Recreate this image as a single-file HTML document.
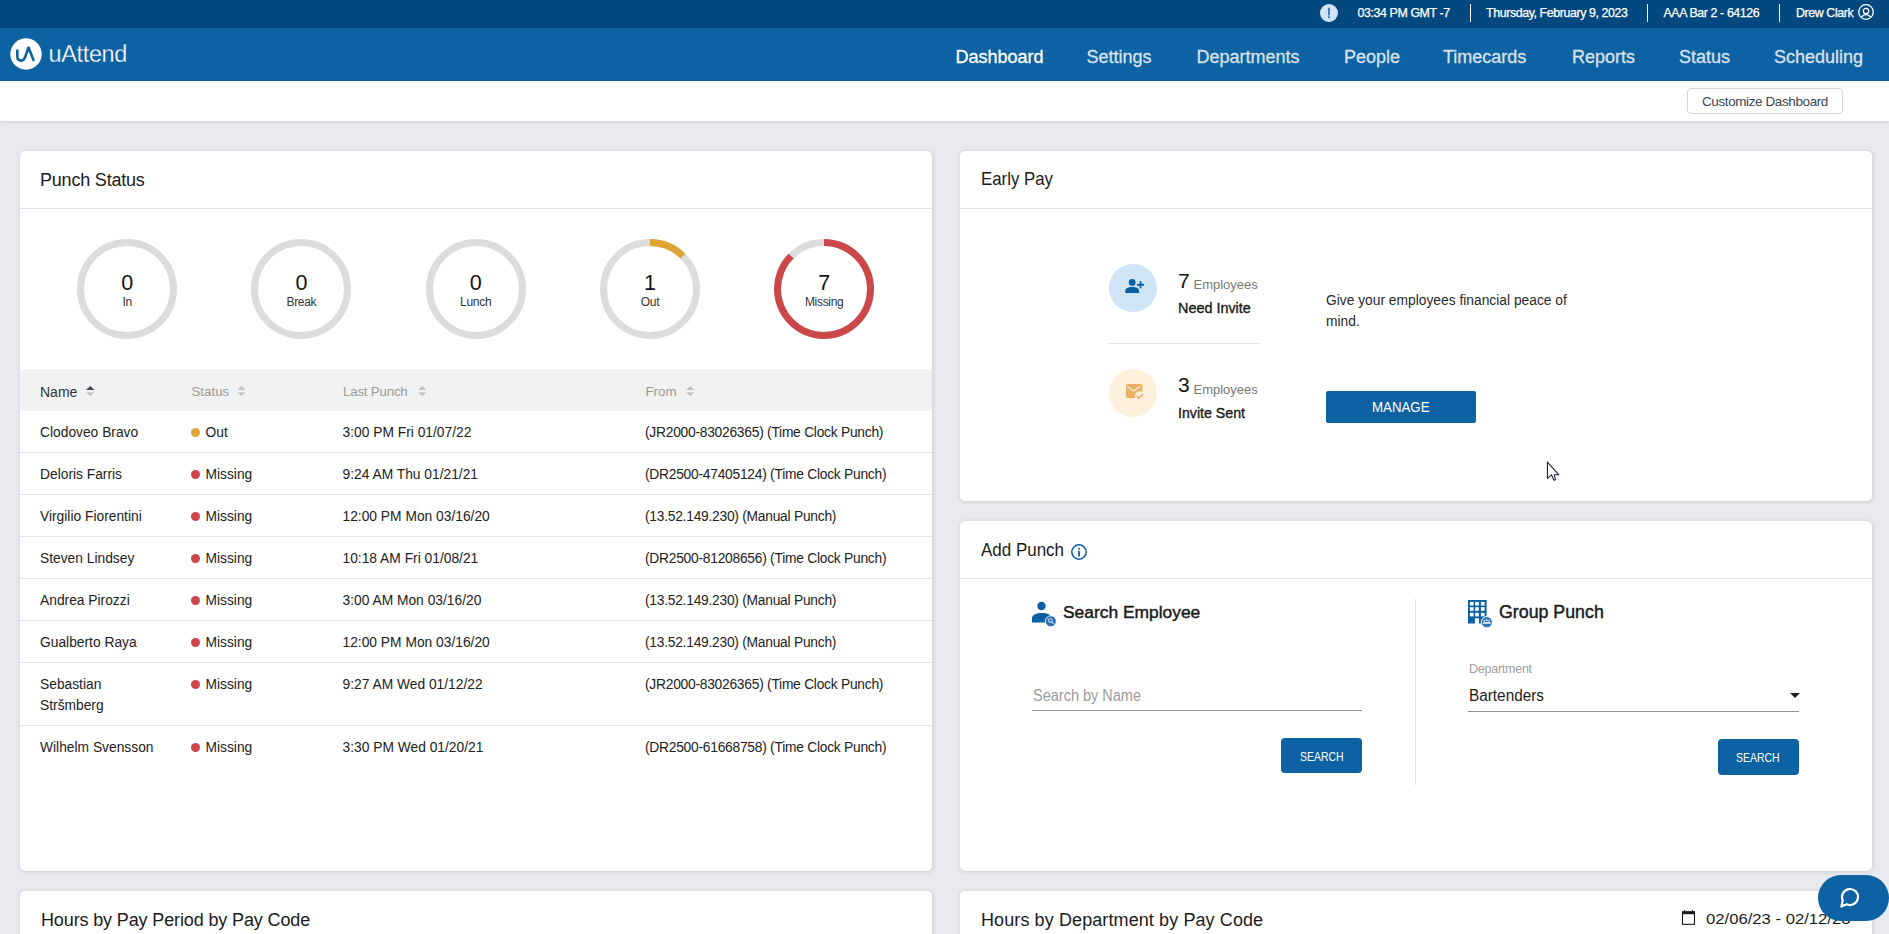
<!DOCTYPE html>
<html><head><meta charset="utf-8"><style>
*{box-sizing:border-box;margin:0;padding:0}
html,body{width:1889px;height:934px;overflow:hidden;background:#e9eaed;font-family:"Liberation Sans",sans-serif;color:#222}
.a{position:absolute;white-space:nowrap;line-height:1}
svg{position:absolute;overflow:visible}
</style></head><body>
<div style="position:absolute;left:0px;top:0px;width:1889px;height:28px;background:#03497f"></div>
<div style="position:absolute;left:0px;top:28px;width:1889px;height:53px;background:#0c62a2"></div>
<div style="position:absolute;left:0px;top:81px;width:1889px;height:40px;background:#fff;box-shadow:0 1px 3px rgba(0,0,0,.10)"></div>
<svg style="left:1320px;top:4px" width="18" height="18" viewBox="0 0 18 18"><circle cx="9" cy="9" r="9" fill="#d2e4f3"/><rect x="8.2" y="3.8" width="1.6" height="7.6" fill="#1b62a8"/><rect x="8.2" y="12.4" width="1.6" height="1.7" fill="#1b62a8"/></svg>
<div class="a" style="left:1357.5px;top:6.50px;font-size:12.4px;color:#fff;font-weight:400;letter-spacing:-0.4px;-webkit-text-stroke:0.25px #fff">03:34 PM GMT -7</div>
<div style="position:absolute;left:1470px;top:4px;width:1px;height:18px;background:#fff"></div>
<div class="a" style="left:1486px;top:6.50px;font-size:12.4px;color:#fff;font-weight:400;letter-spacing:-0.4px;-webkit-text-stroke:0.25px #fff">Thursday, February 9, 2023</div>
<div style="position:absolute;left:1647px;top:4px;width:1px;height:18px;background:#fff"></div>
<div class="a" style="left:1663.5px;top:6.50px;font-size:12.4px;color:#fff;font-weight:400;letter-spacing:-0.4px;-webkit-text-stroke:0.25px #fff">AAA Bar 2 - 64126</div>
<div style="position:absolute;left:1779px;top:4px;width:1px;height:18px;background:#fff"></div>
<div class="a" style="left:1796px;top:6.50px;font-size:12.4px;color:#fff;font-weight:400;letter-spacing:-0.4px;-webkit-text-stroke:0.25px #fff">Drew Clark</div>
<svg style="left:1858px;top:4px" width="16" height="16" viewBox="0 0 16 16" fill="none" stroke="#fff" stroke-width="1.3"><circle cx="8" cy="8" r="7.3"/><circle cx="8" cy="7" r="2.7"/><path d="M3.4 13.4c1.1-1.9 2.7-2.8 4.6-2.8s3.5 0.9 4.6 2.8"/></svg>
<svg style="left:10px;top:38px" width="32" height="32" viewBox="0 0 32 32"><circle cx="16" cy="16" r="15.7" fill="#fff"/><path d="M7.3 12.5v5.5c0 3 1.6 4.6 3.8 4.6 2.2 0 3.3-1.6 4.1-3.6l3.3-9.5 5 12.5" fill="none" stroke="#0c62a2" stroke-width="2.6" stroke-linecap="round" stroke-linejoin="round"/></svg>
<div class="a" style="left:48.5px;top:42.61px;font-size:23.5px;color:#fff;font-weight:400;letter-spacing:-0.35px;-webkit-text-stroke:0.3px #0c62a2">uAttend</div>
<div class="a" style="left:955.5px;top:47.76px;font-size:18px;color:#fff;font-weight:400;-webkit-text-stroke:0.3px #fff">Dashboard</div>
<div class="a" style="left:1086.5px;top:47.76px;font-size:18px;color:#d9e1ea;font-weight:400;-webkit-text-stroke:0.3px #d9e1ea">Settings</div>
<div class="a" style="left:1196.5px;top:47.76px;font-size:18px;color:#d9e1ea;font-weight:400;-webkit-text-stroke:0.3px #d9e1ea">Departments</div>
<div class="a" style="left:1344px;top:47.76px;font-size:18px;color:#d9e1ea;font-weight:400;-webkit-text-stroke:0.3px #d9e1ea">People</div>
<div class="a" style="left:1443px;top:47.76px;font-size:18px;color:#d9e1ea;font-weight:400;-webkit-text-stroke:0.3px #d9e1ea">Timecards</div>
<div class="a" style="left:1572px;top:47.76px;font-size:18px;color:#d9e1ea;font-weight:400;-webkit-text-stroke:0.3px #d9e1ea">Reports</div>
<div class="a" style="left:1679px;top:47.76px;font-size:18px;color:#d9e1ea;font-weight:400;-webkit-text-stroke:0.3px #d9e1ea">Status</div>
<div class="a" style="left:1774px;top:47.76px;font-size:18px;color:#d9e1ea;font-weight:400;-webkit-text-stroke:0.3px #d9e1ea">Scheduling</div>
<div style="position:absolute;left:1687px;top:88px;width:156px;height:26px;border:1px solid #d5d5d5;border-radius:4px;background:#fff"></div>
<div class="a" style="left:1702px;top:95.07px;font-size:13.5px;color:#3b4651;font-weight:400;letter-spacing:-0.4px">Customize Dashboard</div>
<div style="position:absolute;left:20px;top:151px;width:912px;height:720px;background:#fff;border-radius:5px;box-shadow:0.5px 0.5px 4px rgba(0,0,0,.12)"></div>
<div style="position:absolute;left:960px;top:151px;width:912px;height:350px;background:#fff;border-radius:5px;box-shadow:0.5px 0.5px 4px rgba(0,0,0,.12)"></div>
<div style="position:absolute;left:960px;top:521px;width:912px;height:350px;background:#fff;border-radius:5px;box-shadow:0.5px 0.5px 4px rgba(0,0,0,.12)"></div>
<div style="position:absolute;left:20px;top:891px;width:912px;height:60px;background:#fff;border-radius:5px;box-shadow:0.5px 0.5px 4px rgba(0,0,0,.12)"></div>
<div style="position:absolute;left:960px;top:891px;width:912px;height:60px;background:#fff;border-radius:5px;box-shadow:0.5px 0.5px 4px rgba(0,0,0,.12)"></div>
<div class="a" style="left:40px;top:171.26px;font-size:18px;color:#1b1b1b;font-weight:400;letter-spacing:-0.2px">Punch Status</div>
<div style="position:absolute;left:20px;top:208px;width:912px;height:1px;background:#dedfe2"></div>
<svg style="left:77.2px;top:239px" width="100" height="100" viewBox="0 0 100 100"><circle cx="50" cy="50" r="46.5" fill="none" stroke="#dcdcdc" stroke-width="7"/></svg>
<div class="a" style="left:87.2px;width:80px;text-align:center;top:273.30px;font-size:21.5px;color:#111">0</div>
<div class="a" style="left:87.2px;width:80px;text-align:center;top:296.34px;font-size:12px;letter-spacing:-0.3px;color:#333">In</div>
<svg style="left:251.4px;top:239px" width="100" height="100" viewBox="0 0 100 100"><circle cx="50" cy="50" r="46.5" fill="none" stroke="#dcdcdc" stroke-width="7"/></svg>
<div class="a" style="left:261.4px;width:80px;text-align:center;top:273.30px;font-size:21.5px;color:#111">0</div>
<div class="a" style="left:261.4px;width:80px;text-align:center;top:296.34px;font-size:12px;letter-spacing:-0.3px;color:#333">Break</div>
<svg style="left:425.7px;top:239px" width="100" height="100" viewBox="0 0 100 100"><circle cx="50" cy="50" r="46.5" fill="none" stroke="#dcdcdc" stroke-width="7"/></svg>
<div class="a" style="left:435.7px;width:80px;text-align:center;top:273.30px;font-size:21.5px;color:#111">0</div>
<div class="a" style="left:435.7px;width:80px;text-align:center;top:296.34px;font-size:12px;letter-spacing:-0.3px;color:#333">Lunch</div>
<svg style="left:600.0px;top:239px" width="100" height="100" viewBox="0 0 100 100"><circle cx="50" cy="50" r="46.5" fill="none" stroke="#dcdcdc" stroke-width="7"/><path d="M50 3.5 A46.5 46.5 0 0 1 82.88 17.12" fill="none" stroke="#dea434" stroke-width="7"/></svg>
<div class="a" style="left:610.0px;width:80px;text-align:center;top:273.30px;font-size:21.5px;color:#111">1</div>
<div class="a" style="left:610.0px;width:80px;text-align:center;top:296.34px;font-size:12px;letter-spacing:-0.3px;color:#333">Out</div>
<svg style="left:774.2px;top:239px" width="100" height="100" viewBox="0 0 100 100"><circle cx="50" cy="50" r="46.5" fill="none" stroke="#dcdcdc" stroke-width="7"/><path d="M50 3.5 A46.5 46.5 0 1 1 17.12 17.12" fill="none" stroke="#cc474a" stroke-width="7"/></svg>
<div class="a" style="left:784.2px;width:80px;text-align:center;top:273.30px;font-size:21.5px;color:#111">7</div>
<div class="a" style="left:784.2px;width:80px;text-align:center;top:296.34px;font-size:12px;letter-spacing:-0.3px;color:#333">Missing</div>
<div style="position:absolute;left:20px;top:369px;width:912px;height:42px;background:#f1f2f2"></div>
<div class="a" style="left:40px;top:384.65px;font-size:14px;color:#333;font-weight:400;">Name</div>
<svg style="left:85.5px;top:385.9px" width="9" height="11" viewBox="0 0 9 11"><path d="M4.3 0L8.6 3.9H0z" fill="#3d4b59"/><path d="M4.3 10.1L8.6 6.2H0z" fill="#c6c6c6"/></svg>
<div class="a" style="left:191.5px;top:385.24px;font-size:13.3px;color:#9a9a9a;font-weight:400;">Status</div>
<svg style="left:237px;top:386px" width="9" height="11" viewBox="0 0 9 11"><path d="M4.3 0L8.6 3.9H0z" fill="#c4c4c4"/><path d="M4.3 10.1L8.6 6.2H0z" fill="#c6c6c6"/></svg>
<div class="a" style="left:343px;top:385.24px;font-size:13.3px;color:#9a9a9a;font-weight:400;letter-spacing:-0.2px">Last Punch</div>
<svg style="left:417.5px;top:386px" width="9" height="11" viewBox="0 0 9 11"><path d="M4.3 0L8.6 3.9H0z" fill="#c4c4c4"/><path d="M4.3 10.1L8.6 6.2H0z" fill="#c6c6c6"/></svg>
<div class="a" style="left:645.5px;top:385.24px;font-size:13.3px;color:#9a9a9a;font-weight:400;">From</div>
<svg style="left:685.5px;top:386px" width="9" height="11" viewBox="0 0 9 11"><path d="M4.3 0L8.6 3.9H0z" fill="#c4c4c4"/><path d="M4.3 10.1L8.6 6.2H0z" fill="#c6c6c6"/></svg>
<div class="a" style="left:40px;top:426.32px;font-size:13.8px;color:#222;font-weight:400;">Clodoveo Bravo</div>
<div style="position:absolute;left:191px;top:428px;width:9px;height:9px;border-radius:50%;background:#dea434"></div>
<div class="a" style="left:205.5px;top:426.32px;font-size:13.8px;color:#222;font-weight:400;">Out</div>
<div class="a" style="left:342.5px;top:426.32px;font-size:13.8px;color:#222;font-weight:400;">3:00 PM Fri 01/07/22</div>
<div class="a" style="left:645px;top:426.32px;font-size:13.8px;color:#222;font-weight:400;letter-spacing:-0.25px">(JR2000-83026365) (Time Clock Punch)</div>
<div class="a" style="left:40px;top:468.32px;font-size:13.8px;color:#222;font-weight:400;">Deloris Farris</div>
<div style="position:absolute;left:191px;top:470px;width:9px;height:9px;border-radius:50%;background:#cc474a"></div>
<div class="a" style="left:205.5px;top:468.32px;font-size:13.8px;color:#222;font-weight:400;">Missing</div>
<div class="a" style="left:342.5px;top:468.32px;font-size:13.8px;color:#222;font-weight:400;">9:24 AM Thu 01/21/21</div>
<div class="a" style="left:645px;top:468.32px;font-size:13.8px;color:#222;font-weight:400;letter-spacing:-0.25px">(DR2500-47405124) (Time Clock Punch)</div>
<div class="a" style="left:40px;top:510.32px;font-size:13.8px;color:#222;font-weight:400;">Virgilio Fiorentini</div>
<div style="position:absolute;left:191px;top:512px;width:9px;height:9px;border-radius:50%;background:#cc474a"></div>
<div class="a" style="left:205.5px;top:510.32px;font-size:13.8px;color:#222;font-weight:400;">Missing</div>
<div class="a" style="left:342.5px;top:510.32px;font-size:13.8px;color:#222;font-weight:400;">12:00 PM Mon 03/16/20</div>
<div class="a" style="left:645px;top:510.32px;font-size:13.8px;color:#222;font-weight:400;letter-spacing:-0.25px">(13.52.149.230) (Manual Punch)</div>
<div class="a" style="left:40px;top:552.32px;font-size:13.8px;color:#222;font-weight:400;">Steven Lindsey</div>
<div style="position:absolute;left:191px;top:554px;width:9px;height:9px;border-radius:50%;background:#cc474a"></div>
<div class="a" style="left:205.5px;top:552.32px;font-size:13.8px;color:#222;font-weight:400;">Missing</div>
<div class="a" style="left:342.5px;top:552.32px;font-size:13.8px;color:#222;font-weight:400;">10:18 AM Fri 01/08/21</div>
<div class="a" style="left:645px;top:552.32px;font-size:13.8px;color:#222;font-weight:400;letter-spacing:-0.25px">(DR2500-81208656) (Time Clock Punch)</div>
<div class="a" style="left:40px;top:594.32px;font-size:13.8px;color:#222;font-weight:400;">Andrea Pirozzi</div>
<div style="position:absolute;left:191px;top:596px;width:9px;height:9px;border-radius:50%;background:#cc474a"></div>
<div class="a" style="left:205.5px;top:594.32px;font-size:13.8px;color:#222;font-weight:400;">Missing</div>
<div class="a" style="left:342.5px;top:594.32px;font-size:13.8px;color:#222;font-weight:400;">3:00 AM Mon 03/16/20</div>
<div class="a" style="left:645px;top:594.32px;font-size:13.8px;color:#222;font-weight:400;letter-spacing:-0.25px">(13.52.149.230) (Manual Punch)</div>
<div class="a" style="left:40px;top:636.32px;font-size:13.8px;color:#222;font-weight:400;">Gualberto Raya</div>
<div style="position:absolute;left:191px;top:638px;width:9px;height:9px;border-radius:50%;background:#cc474a"></div>
<div class="a" style="left:205.5px;top:636.32px;font-size:13.8px;color:#222;font-weight:400;">Missing</div>
<div class="a" style="left:342.5px;top:636.32px;font-size:13.8px;color:#222;font-weight:400;">12:00 PM Mon 03/16/20</div>
<div class="a" style="left:645px;top:636.32px;font-size:13.8px;color:#222;font-weight:400;letter-spacing:-0.25px">(13.52.149.230) (Manual Punch)</div>
<div class="a" style="left:40px;top:678.32px;font-size:13.8px;color:#222;font-weight:400;">Sebastian</div>
<div class="a" style="left:40px;top:699.32px;font-size:13.8px;color:#222;font-weight:400;">Stršmberg</div>
<div style="position:absolute;left:191px;top:680px;width:9px;height:9px;border-radius:50%;background:#cc474a"></div>
<div class="a" style="left:205.5px;top:678.32px;font-size:13.8px;color:#222;font-weight:400;">Missing</div>
<div class="a" style="left:342.5px;top:678.32px;font-size:13.8px;color:#222;font-weight:400;">9:27 AM Wed 01/12/22</div>
<div class="a" style="left:645px;top:678.32px;font-size:13.8px;color:#222;font-weight:400;letter-spacing:-0.25px">(JR2000-83026365) (Time Clock Punch)</div>
<div class="a" style="left:40px;top:741.32px;font-size:13.8px;color:#222;font-weight:400;">Wilhelm Svensson</div>
<div style="position:absolute;left:191px;top:743px;width:9px;height:9px;border-radius:50%;background:#cc474a"></div>
<div class="a" style="left:205.5px;top:741.32px;font-size:13.8px;color:#222;font-weight:400;">Missing</div>
<div class="a" style="left:342.5px;top:741.32px;font-size:13.8px;color:#222;font-weight:400;">3:30 PM Wed 01/20/21</div>
<div class="a" style="left:645px;top:741.32px;font-size:13.8px;color:#222;font-weight:400;letter-spacing:-0.25px">(DR2500-61668758) (Time Clock Punch)</div>
<div style="position:absolute;left:20px;top:452px;width:912px;height:1px;background:#e5e5e5"></div>
<div style="position:absolute;left:20px;top:494px;width:912px;height:1px;background:#e5e5e5"></div>
<div style="position:absolute;left:20px;top:536px;width:912px;height:1px;background:#e5e5e5"></div>
<div style="position:absolute;left:20px;top:578px;width:912px;height:1px;background:#e5e5e5"></div>
<div style="position:absolute;left:20px;top:620px;width:912px;height:1px;background:#e5e5e5"></div>
<div style="position:absolute;left:20px;top:662px;width:912px;height:1px;background:#e5e5e5"></div>
<div style="position:absolute;left:20px;top:725px;width:912px;height:1px;background:#e5e5e5"></div>
<div class="a" style="left:981px;top:170.34px;font-size:18.5px;color:#1b1b1b;font-weight:400;transform-origin:0 0;transform:scaleX(0.9094);">Early Pay</div>
<div style="position:absolute;left:960px;top:208px;width:912px;height:1px;background:#dedfe2"></div>
<div style="position:absolute;left:1109px;top:264px;width:48px;height:48px;border-radius:50%;background:#cfe4f4"></div>
<div style="position:absolute;left:1109px;top:369px;width:48px;height:48px;border-radius:50%;background:#fdf1de"></div>
<div style="position:absolute;left:1109px;top:343px;width:151px;height:1px;background:#e3e3e3"></div>
<svg style="left:1125px;top:279px" width="20" height="15" viewBox="0 0 20 15" fill="#0b5fa3"><circle cx="7.2" cy="3.4" r="3.4"/><path d="M0.3 14v-2.2c0-2.5 3-3.8 6.9-3.8s6.9 1.3 6.9 3.8V14z"/><rect x="12" y="4.9" width="7" height="1.8"/><rect x="14.6" y="2.3" width="1.8" height="7"/></svg>
<svg style="left:1126px;top:384px" width="19" height="16" viewBox="0 0 19 16"><rect x="0" y="0" width="16.5" height="14" rx="1.6" fill="#e9b063"/><path d="M1.3 2.3L7.4 6.9 14.3 2.6" fill="none" stroke="#fdf1de" stroke-width="1.2"/><circle cx="13.6" cy="12" r="4.7" fill="#fdf1de"/><path d="M10.6 12.1l2 2.3 4.3-4.2" fill="none" stroke="#e9b063" stroke-width="1.6"/></svg>
<div class="a" style="left:1178px;top:269.72px;font-size:21px;color:#111;font-weight:400;">7</div>
<div class="a" style="left:1193.5px;top:277.50px;font-size:13px;color:#777;font-weight:400;">Employees</div>
<div class="a" style="left:1178px;top:301.31px;font-size:14.4px;color:#1b1b1b;font-weight:400;-webkit-text-stroke:0.35px #1b1b1b">Need Invite</div>
<div class="a" style="left:1178px;top:374.42px;font-size:21px;color:#111;font-weight:400;">3</div>
<div class="a" style="left:1193.5px;top:382.50px;font-size:13px;color:#777;font-weight:400;">Employees</div>
<div class="a" style="left:1178px;top:405.98px;font-size:14.2px;color:#1b1b1b;font-weight:400;-webkit-text-stroke:0.35px #1b1b1b">Invite Sent</div>
<div class="a" style="left:1326px;top:293.82px;font-size:13.8px;color:#2a2a2a;font-weight:400;">Give your employees financial peace of</div>
<div class="a" style="left:1326px;top:314.82px;font-size:13.8px;color:#2a2a2a;font-weight:400;">mind.</div>
<div style="position:absolute;left:1326px;top:391px;width:150px;height:32px;border-radius:2px;background:#0c62a2"></div>
<div class="a" style="left:1371.5px;top:400.23px;font-size:14.5px;color:#fff;font-weight:400;transform-origin:0 0;transform:scaleX(0.9150);">MANAGE</div>
<svg style="left:1546px;top:461px" width="16" height="22" viewBox="0 0 16 22"><path d="M1.4 1.2V17.4L5.6 13.9L7.5 18.6Q8.3 19.6 9.4 18.9L8.4 13.8H12.9Z" fill="#fff" stroke="#1a2230" stroke-width="1.1" stroke-linejoin="round"/></svg>
<div class="a" style="left:980.5px;top:540.84px;font-size:18.5px;color:#1b1b1b;font-weight:400;transform-origin:0 0;transform:scaleX(0.9170);">Add Punch</div>
<svg style="left:1071px;top:544px" width="16" height="16" viewBox="0 0 16 16"><circle cx="8" cy="8" r="7.2" fill="none" stroke="#0a58a0" stroke-width="1.5"/><rect x="7.1" y="3.8" width="1.8" height="1.8" fill="#0a58a0"/><rect x="7.1" y="6.8" width="1.8" height="5.6" rx="0.5" fill="#0a58a0"/></svg>
<div style="position:absolute;left:960px;top:578px;width:912px;height:1px;background:#dedfe2"></div>
<svg style="left:1032px;top:602px" width="25" height="25" viewBox="0 0 25 25"><circle cx="9.5" cy="4" r="4.2" fill="#0b5fa3"/><path d="M0 20.5v-4.2c0-3.5 4.5-5.3 9.8-5.3s9.8 1.8 9.8 5.3v4.2z" fill="#0b5fa3"/><circle cx="18.8" cy="19.3" r="5.5" fill="#2b72b5" stroke="#fff" stroke-width="0.9"/><circle cx="18.3" cy="18.5" r="1.9" fill="none" stroke="#dfe8f2" stroke-width="1"/><path d="M19.7 19.9l2 2" stroke="#dfe8f2" stroke-width="1.1"/></svg>
<div class="a" style="left:1063px;top:604.27px;font-size:17.4px;color:#1b1b1b;font-weight:400;-webkit-text-stroke:0.45px #1b1b1b">Search Employee</div>
<div class="a" style="left:1032.5px;top:687.96px;font-size:16px;color:#9b9b9b;font-weight:400;transform-origin:0 0;transform:scaleX(0.9063);">Search by Name</div>
<div style="position:absolute;left:1032px;top:710px;width:330px;height:1.3px;background:#909090"></div>
<div style="position:absolute;left:1281px;top:738px;width:81px;height:35px;border-radius:4px;background:#0c62a2"></div>
<div class="a" style="left:1299.5px;top:749.50px;font-size:13px;color:#fff;font-weight:400;transform-origin:0 0;transform:scaleX(0.8028);">SEARCH</div>
<div style="position:absolute;left:1415px;top:599px;width:1px;height:186px;background:#dedfe2"></div>
<svg style="left:1468px;top:600px" width="26" height="29" viewBox="0 0 26 29"><path d="M0 0h18.6v23.5H10.9v-5.2H6.9v5.2H0z" fill="#0b5fa3"/><g fill="#fff"><rect x="1.9" y="1.9" width="3.7" height="3.6"/><rect x="7.1" y="1.9" width="3.7" height="3.6"/><rect x="12.9" y="1.9" width="3.7" height="3.6"/><rect x="1.9" y="7.2" width="3.7" height="3.6"/><rect x="7.1" y="7.2" width="3.7" height="3.6"/><rect x="12.9" y="7.2" width="3.7" height="3.6"/><rect x="1.9" y="12.8" width="3.7" height="3.6"/><rect x="7.1" y="12.8" width="3.7" height="3.6"/><rect x="12.9" y="12.8" width="3.7" height="3.6"/></g><circle cx="18.8" cy="22.2" r="5.6" fill="#2b72b5" stroke="#fff" stroke-width="1"/><g fill="#e6eef6"><circle cx="16.3" cy="20.6" r="0.9"/><circle cx="18.8" cy="20.2" r="0.9"/><circle cx="21.3" cy="20.6" r="0.9"/><rect x="14.8" y="22" width="8" height="1.8" rx="0.9"/></g></svg>
<div class="a" style="left:1499px;top:603.93px;font-size:17.8px;color:#1b1b1b;font-weight:400;-webkit-text-stroke:0.45px #1b1b1b">Group Punch</div>
<div class="a" style="left:1469px;top:662.92px;font-size:12.5px;color:#a0a0a0;font-weight:400;letter-spacing:-0.25px">Department</div>
<div class="a" style="left:1469.3px;top:687.96px;font-size:16px;color:#1b1b1b;font-weight:400;transform-origin:0 0;transform:scaleX(0.9583);">Bartenders</div>
<svg style="left:1790px;top:693px" width="10" height="5" viewBox="0 0 10 5"><path d="M0 0h10L5 5z" fill="#222"/></svg>
<div style="position:absolute;left:1468px;top:711px;width:331px;height:1.3px;background:#909090"></div>
<div style="position:absolute;left:1718px;top:739px;width:81px;height:36px;border-radius:4px;background:#0c62a2"></div>
<div class="a" style="left:1736px;top:750.50px;font-size:13px;color:#fff;font-weight:400;transform-origin:0 0;transform:scaleX(0.8028);">SEARCH</div>
<div class="a" style="left:41px;top:910.76px;font-size:18px;color:#1b1b1b;font-weight:400;letter-spacing:-0.13px">Hours by Pay Period by Pay Code</div>
<div class="a" style="left:981px;top:910.76px;font-size:18px;color:#1b1b1b;font-weight:400;letter-spacing:0.1px">Hours by Department by Pay Code</div>
<svg style="left:1682px;top:909.5px" width="14" height="16" viewBox="0 0 14 16"><rect x="0.5" y="1.9" width="12" height="12.4" fill="none" stroke="#1b1b1b" stroke-width="1.1"/><rect x="0" y="1.4" width="13" height="2.8" fill="#1b1b1b"/><rect x="2" y="0" width="1" height="1.6" fill="#1b1b1b"/><rect x="10" y="0" width="1" height="1.6" fill="#1b1b1b"/></svg>
<div class="a" style="left:1706px;top:911.30px;font-size:15px;color:#1b1b1b;font-weight:400;transform-origin:0 0;transform:scaleX(1.1106);">02/06/23 - 02/12/23</div>
<div style="position:absolute;left:1818px;top:875px;width:71px;height:46px;border-radius:23px;background:#0c62a2"></div>
<svg style="left:1838px;top:885px" width="24" height="24" viewBox="0 0 24 24"><path d="M8.62 19.25A8 8 0 1 0 4.75 15.38L3.4 21.6Z" fill="none" stroke="#fff" stroke-width="2.2" stroke-linejoin="round"/></svg>
</body></html>
